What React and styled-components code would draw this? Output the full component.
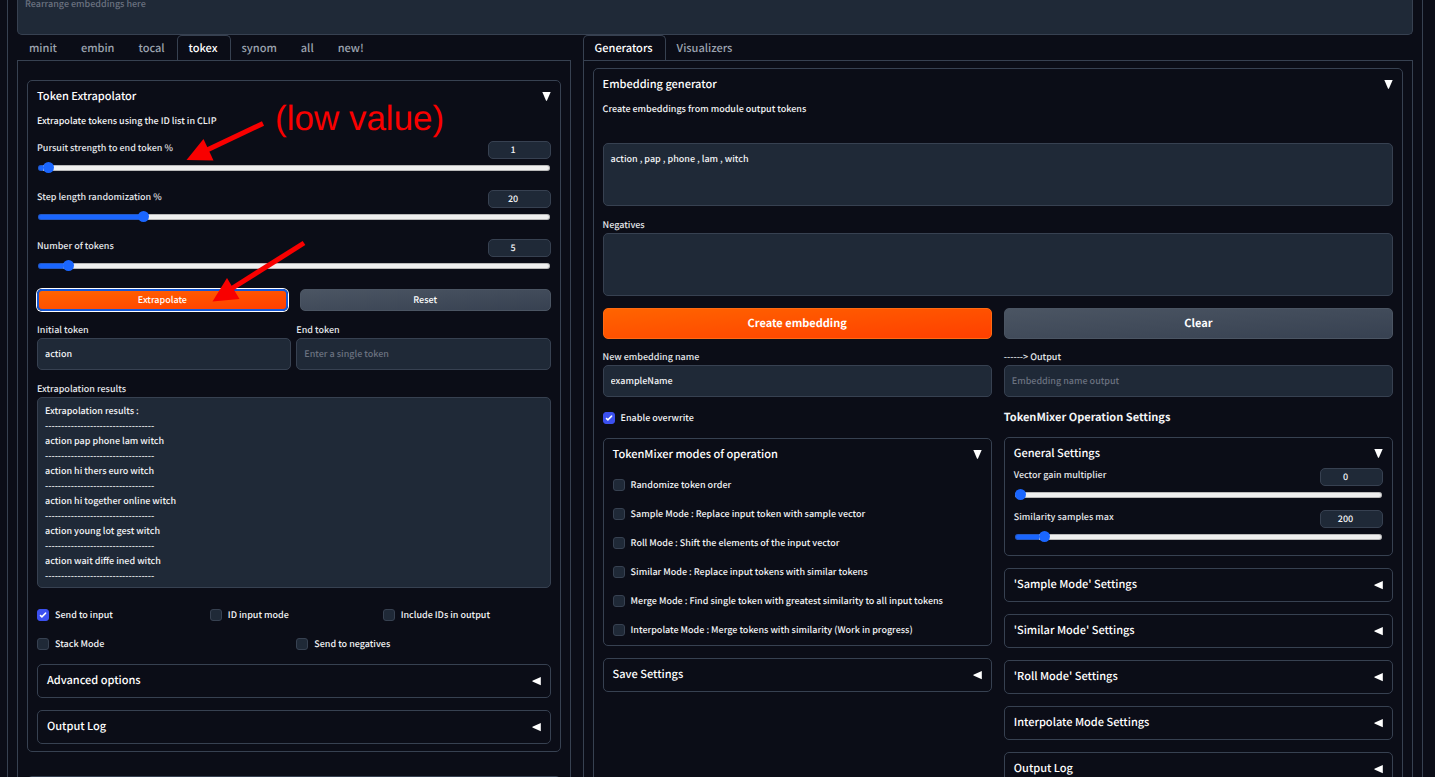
import React, { useId, useState } from "react";
import styled, { createGlobalStyle, css } from "styled-components";

const color = {
  page: "#0b0d17",
  field: "#1f2937",
  line: "#374151",
  text: "#f3f4f6",
  muted: "#9ca3af",
  placeholder: "#6b7280",
  blue: "#1a66ff",
  mark: "#f90000",
};

const GlobalStyle = createGlobalStyle`
  *, *::before, *::after { box-sizing: border-box; }
  html, body { margin: 0; background: ${color.page}; }
  html { overflow: hidden; }
  body, button, input, textarea {
    font-family: "Source Sans Pro", "Noto Sans CJK SC", "Noto Sans", sans-serif;
    font-weight: 500;
    text-rendering: geometricPrecision;
  }
  body { color: ${color.text}; font-size: 9px; line-height: 14px; }
`;

const Page = styled.div`
  position: relative;
  height: 100vh;
  overflow: hidden;
  padding: 0 12px 0 7px;
`;

const Shell = styled.main`
  border: solid ${color.line};
  border-width: 0 1px;
  padding: 0 9px;
`;

const fieldStyle = css`
  display: block;
  width: 100%;
  margin: 0;
  border: 1px solid ${color.line};
  border-radius: 5px;
  background: ${color.field};
  color: ${color.text};
  font-size: 9px;
  outline: none;
  &::placeholder { color: ${color.placeholder}; opacity: 1; }
`;

const Rearrange = styled.textarea`
  ${fieldStyle}
  height: 35px;
  padding: 0 7px;
  border-top: 0;
  border-radius: 0 0 5px 5px;
  line-height: 8px;
  resize: none;
`;

const Area = styled.textarea`
  ${fieldStyle}
  height: ${(p) => p.$height}px;
  padding: ${(p) => (p.$dense ? 5 : 7)}px 7px 0;
  line-height: 15px;
  resize: none;
  overflow: hidden;
`;

const TextInput = styled.input`
  ${fieldStyle}
  height: 32px;
  padding: 0 7px 2px;
`;

const Columns = styled.div`
  display: grid;
  grid-template-columns: minmax(0, 2fr) minmax(0, 3fr);
  gap: 12px;
`;

const Column = styled.section`
  display: flex;
  flex-direction: column;
`;

const TabList = styled.div`
  display: flex;
  height: 25px;
`;

const Tab = styled.button`
  border: 1px solid ${(p) => (p.$active ? color.line : "transparent")};
  border-bottom: 0;
  border-radius: 5px 5px 0 0;
  margin-right: -1px;
  padding: 0 12px 0 11px;
  background: none;
  color: ${(p) => (p.$active ? "#ffffff" : color.muted)};
  font-size: 11px;
  line-height: 22px;
`;

const Panel = styled.div`
  flex: 1;
  min-height: 730px;
  border: 1px solid ${color.line};
  padding: ${(p) => p.$top}px 9px 9px;
`;

const Block = styled.section`
  border: 1px solid ${color.line};
  border-radius: 5px;
  padding: 8px 9px ${(p) => p.$bottom ?? 8}px;
  margin-top: ${(p) => p.$gap ?? 0}px;
`;

const BlockHead = styled.button`
  display: flex;
  align-items: flex-start;
  justify-content: space-between;
  width: 100%;
  height: 16px;
  padding: 0;
  border: 0;
  background: none;
  color: #ffffff;
  font-size: 11px;
  line-height: 15px;
`;

const Description = styled.p`
  margin: 9px 0 ${(p) => p.$gap}px;
`;

const SliderList = styled.div`
  display: flex;
  flex-direction: column;
  gap: ${(p) => p.$gap}px;
  margin-top: ${(p) => p.$top ?? 0}px;
`;

const SliderHead = styled.div`
  display: flex;
  justify-content: space-between;
  align-items: flex-start;
  height: 18px;
  margin-bottom: 3px;
`;

const Label = styled.label`
  display: block;
  color: #e5e7eb;
`;

const NumberBox = styled.input`
  ${fieldStyle}
  width: 63px;
  height: 18px;
  padding: 0 12px 2px 0;
  text-align: center;
  appearance: textfield;
  &::-webkit-inner-spin-button { appearance: none; margin: 0; }
`;

const Range = styled.input`
  display: block;
  width: 100%;
  height: 12px;
  margin: 0;
  appearance: none;
  background: none;
  &::-webkit-slider-runnable-track {
    height: 6px;
    margin: 0 1px;
    border-radius: 3px;
    box-shadow: inset 0 0 0 1px rgba(60, 60, 60, 0.3);
    background: linear-gradient(${color.blue}, ${color.blue}) 0 0 / var(--fill) 100% no-repeat #efefef;
  }
  &::-webkit-slider-thumb {
    appearance: none;
    width: 11px;
    height: 11px;
    margin-top: -3px;
    border-radius: 50%;
    background: ${color.blue};
  }
`;

const Pair = styled.div`
  display: grid;
  grid-template-columns: repeat(${(p) => p.$count ?? 2}, minmax(0, 1fr));
  column-gap: ${(p) => p.$gap}px;
  margin-top: ${(p) => p.$top ?? 0}px;
`;

const tones = {
  primary: ["#ff6400", "#ff3f00", "#ff6a12"],
  secondary: ["#4b5563", "#374151", "#4b5563"],
};

const Button = styled.button`
  height: ${(p) => (p.$large ? 31 : 22)}px;
  padding: 0 0 2px;
  border: 1px solid ${(p) => tones[p.$tone][2]};
  border-radius: 5px;
  background: linear-gradient(to bottom right, ${(p) => tones[p.$tone][0]}, ${(p) => tones[p.$tone][1]});
  color: #ffffff;
  font-size: ${(p) => (p.$large ? 11 : 9)}px;
  font-weight: ${(p) => (p.$large ? 700 : 500)};
  ${(p) =>
    p.$focused &&
    css`
      border: 2px solid #1558d6;
      box-shadow: 0 0 0 1px #ffffff;
    `}
`;

const FieldBox = styled.div`
  display: flex;
  flex-direction: column;
  gap: 1px;
  margin-top: ${(p) => p.$top ?? 0}px;
`;

const CheckLabel = styled.label`
  display: flex;
  align-items: center;
  gap: 6px;
  height: 14px;
`;

const CheckBox = styled.input`
  appearance: none;
  width: 12px;
  height: 12px;
  margin: 0;
  border: 1px solid ${color.line};
  border-radius: 3px;
  background: ${color.field};
  &:checked {
    border-color: #3b50f0;
    background: #3b50f0
      url("data:image/svg+xml,%3Csvg viewBox='0 0 16 16' fill='white' xmlns='http://www.w3.org/2000/svg'%3E%3Cpath d='M12.2 4.8a1 1 0 0 1 0 1.4l-5 5a1 1 0 0 1-1.4 0l-2-2a1 1 0 0 1 1.4-1.4L6.5 9.1l4.3-4.3a1 1 0 0 1 1.4 0z'/%3E%3C/svg%3E")
      center / 12px 12px no-repeat;
  }
`;

const CheckList = styled.div`
  display: flex;
  flex-direction: column;
  gap: 15px;
  margin-top: 15px;
`;

const CheckLine = styled.div`
  margin-top: 14px;
`;

const Heading = styled.h3`
  margin: 12px 0 0;
  font-size: 11px;
  font-weight: 700;
  line-height: 16px;
`;

const Notes = styled.div`
  position: absolute;
  inset: 0;
  pointer-events: none;
`;

const NoteArrows = styled.svg`
  position: absolute;
  left: 0;
  top: 0;
`;

const NoteText = styled.span`
  position: absolute;
  left: 275px;
  top: 99px;
  color: ${color.mark};
  font: 400 35px/40px "Liberation Sans", Arial, sans-serif;
`;

function Caret({ open }) {
  return (
    <svg width="9" height="16" viewBox="0 0 9 16" fill="#ffffff" aria-hidden="true">
      {open ? <path d="M0.3 3h8.4L4.9 11.8h-0.8z" /> : <path d="M8.8 4v8.2L0.4 8.6v-0.9z" />}
    </svg>
  );
}

function Accordion({ title, open = false, gap, bottom, children }) {
  return (
    <Block $gap={gap} $bottom={bottom}>
      <BlockHead type="button" aria-expanded={open}>
        <span>{title}</span>
        <Caret open={open} />
      </BlockHead>
      {open && children}
    </Block>
  );
}

function Slider({ label, initial, max }) {
  const id = useId();
  const [value, setValue] = useState(initial);
  const change = (e) => setValue(Number(e.target.value));
  return (
    <div>
      <SliderHead>
        <Label htmlFor={id}>{label}</Label>
        <NumberBox type="number" aria-label={`${label} value`} value={value} onChange={change} />
      </SliderHead>
      <Range
        id={id}
        type="range"
        min={0}
        max={max}
        value={value}
        onChange={change}
        style={{ "--fill": `${(value / max) * 100}%` }}
      />
    </div>
  );
}

function Field({ label, top, area, dense, ...rest }) {
  const id = useId();
  return (
    <FieldBox $top={top}>
      <Label htmlFor={id}>{label}</Label>
      {area ? (
        <Area id={id} $height={area} $dense={dense} {...rest} />
      ) : (
        <TextInput id={id} type="text" {...rest} />
      )}
    </FieldBox>
  );
}

function Check({ label, checked = false }) {
  return (
    <CheckLabel>
      <CheckBox type="checkbox" defaultChecked={checked} />
      {label}
    </CheckLabel>
  );
}

function Tabs({ names, active }) {
  return (
    <TabList role="tablist">
      {names.map((name) => (
        <Tab key={name} type="button" role="tab" aria-selected={name === active} $active={name === active}>
          {name}
        </Tab>
      ))}
    </TabList>
  );
}

const dashes = "-".repeat(34);
const results = [
  "Extrapolation results :",
  "action pap phone lam witch",
  "action hi thers euro witch",
  "action hi together online witch",
  "action young lot gest witch",
  "action wait diffe ined witch",
]
  .map((line) => `${line}\n${dashes}`)
  .join("\n");

const modes = [
  "Randomize token order",
  "Sample Mode : Replace input token with sample vector",
  "Roll Mode : Shift the elements of the input vector",
  "Similar Mode : Replace input tokens with similar tokens",
  "Merge Mode : Find single token with greatest similarity to all input tokens",
  "Interpolate Mode : Merge tokens with similarity (Work in progress)",
];

const closedSettings = [
  "'Sample Mode' Settings",
  "'Similar Mode' Settings",
  "'Roll Mode' Settings",
  "Interpolate Mode Settings",
  "Output Log",
];

function TokenExtrapolator() {
  return (
    <Accordion title="Token Extrapolator" open bottom={7}>
      <Description $gap={13}>Extrapolate tokens using the ID list in CLIP</Description>
      <SliderList $gap={16}>
        <Slider label="Pursuit strength to end token %" initial={1} max={100} />
        <Slider label="Step length randomization %" initial={20} max={100} />
        <Slider label="Number of tokens" initial={5} max={100} />
      </SliderList>
      <Pair $gap={12} $top={17}>
        <Button type="button" $tone="primary" $focused>Extrapolate</Button>
        <Button type="button" $tone="secondary">Reset</Button>
      </Pair>
      <Pair $gap={5} $top={12}>
        <Field label="Initial token" defaultValue="action" />
        <Field label="End token" placeholder="Enter a single token" />
      </Pair>
      <Field label="Extrapolation results" top={12} area={191} dense defaultValue={results} />
      <Pair $gap={5} $top={20} $count={3}>
        <Check label="Send to input" checked />
        <Check label="ID input mode" />
        <Check label="Include IDs in output" />
      </Pair>
      <Pair $gap={5} $top={15}>
        <Check label="Stack Mode" />
        <Check label="Send to negatives" />
      </Pair>
      <Accordion title="Advanced options" gap={13} />
      <Accordion title="Output Log" gap={12} />
    </Accordion>
  );
}

function EmbeddingGenerator() {
  return (
    <Accordion title="Embedding generator" open>
      <Description $gap={27}>Create embeddings from module output tokens</Description>
      <Area $height={63} aria-label="Tokens" defaultValue="action , pap , phone , lam , witch" />
      <Field label="Negatives" top={12} area={63} />
      <Pair $gap={12} $top={12}>
        <Button type="button" $tone="primary" $large>Create embedding</Button>
        <Button type="button" $tone="secondary" $large>Clear</Button>
      </Pair>
      <Pair $gap={12} $top={11}>
        <div>
          <Field label="New embedding name" defaultValue="exampleName" />
          <CheckLine>
            <Check label="Enable overwrite" checked />
          </CheckLine>
          <Accordion title="TokenMixer modes of operation" open gap={13}>
            <CheckList>
              {modes.map((mode) => (
                <Check key={mode} label={mode} />
              ))}
            </CheckList>
          </Accordion>
          <Accordion title="Save Settings" gap={12} />
        </div>
        <div>
          <Field label="------> Output" placeholder="Embedding name output" />
          <Heading>TokenMixer Operation Settings</Heading>
          <Accordion title="General Settings" open gap={12} bottom={12}>
            <SliderList $gap={9} $top={6}>
              <Slider label="Vector gain multiplier" initial={0} max={3000} />
              <Slider label="Similarity samples max" initial={200} max={3000} />
            </SliderList>
          </Accordion>
          {closedSettings.map((title) => (
            <Accordion key={title} title={title} gap={12} />
          ))}
        </div>
      </Pair>
    </Accordion>
  );
}

export default function App() {
  return (
    <Page>
      <GlobalStyle />
      <Shell>
        <Rearrange aria-label="Embeddings" placeholder="Rearrange embeddings here" />
        <Columns>
          <Column>
            <Tabs names={["minit", "embin", "tocal", "tokex", "synom", "all", "new!"]} active="tokex" />
            <Panel $top={19}>
              <TokenExtrapolator />
              <Block $gap={24} />
            </Panel>
          </Column>
          <Column>
            <Tabs names={["Generators", "Visualizers"]} active="Generators" />
            <Panel $top={7}>
              <EmbeddingGenerator />
            </Panel>
          </Column>
        </Columns>
      </Shell>
      <Notes>
        <NoteArrows width="460" height="320" fill={color.mark} stroke={color.mark} aria-hidden="true">
          <path d="M263 123.500L206 150.500" strokeWidth="5" />
          <path d="M186.500 160L203.500 139L213.500 160.500z" stroke="none" />
          <path d="M304 243L231 289" strokeWidth="5" />
          <path d="M212.500 301.500L227 278L239.500 299z" stroke="none" />
        </NoteArrows>
        <NoteText>(low value)</NoteText>
      </Notes>
    </Page>
  );
}
